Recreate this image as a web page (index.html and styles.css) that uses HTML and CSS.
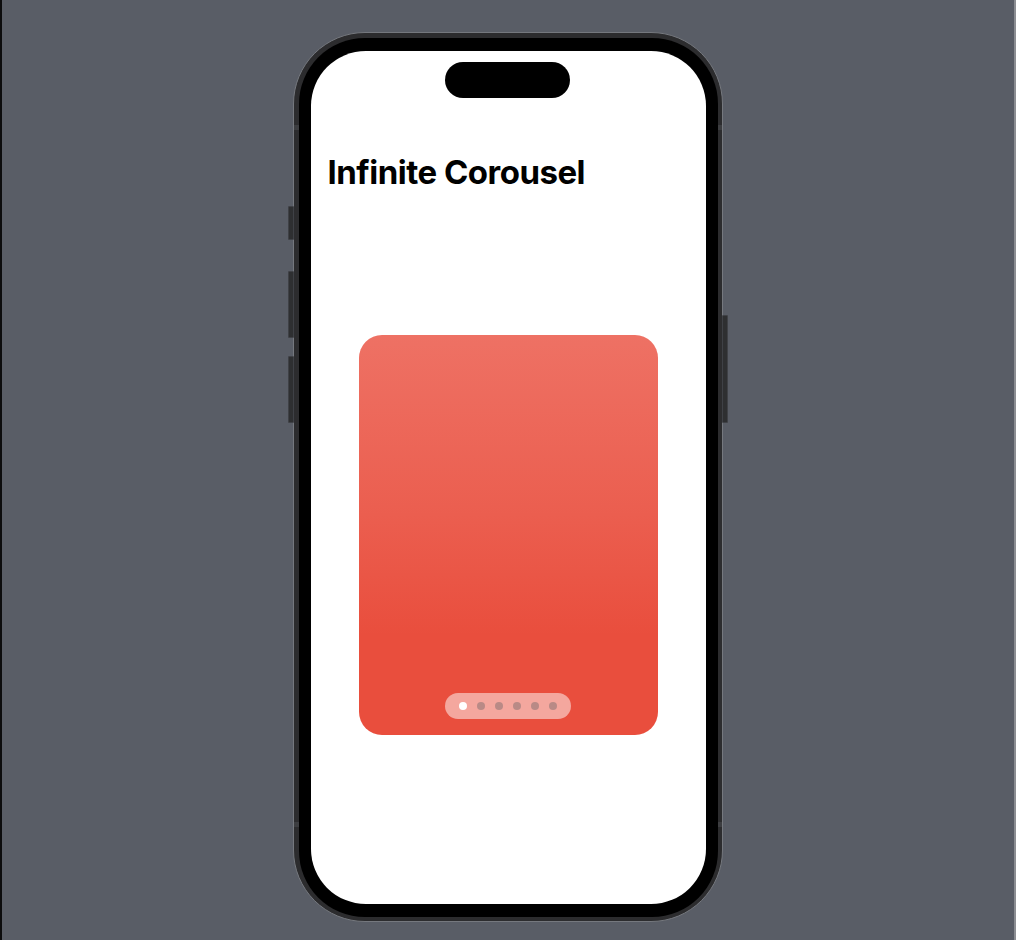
FILE: index.html
```html
<!DOCTYPE html>
<html lang="en">
<head>
<meta charset="utf-8">
<title>Infinite Corousel</title>
<link rel="stylesheet" href="styles.css">
</head>
<body>
<div class="stage">
  <div class="phone">
    <span class="btn btn-action"></span>
    <span class="btn btn-vol-up"></span>
    <span class="btn btn-vol-down"></span>
    <span class="btn btn-power"></span>
    <span class="band band-tl"></span>
    <span class="band band-tr"></span>
    <span class="band band-bl"></span>
    <span class="band band-br"></span>
    <div class="bezel">
      <div class="screen">
        <div class="island"></div>
        <h1 class="title">Infinite Corousel</h1>
        <div class="card">
          <div class="pager">
            <span class="dot active"></span>
            <span class="dot"></span>
            <span class="dot"></span>
            <span class="dot"></span>
            <span class="dot"></span>
            <span class="dot"></span>
          </div>
        </div>
      </div>
    </div>
  </div>
</div>
</body>
</html>
```

FILE: styles.css
```css
html, body {
  margin: 0;
  padding: 0;
}

body {
  background: #595d66;
  font-family: "Inter", "Liberation Sans", sans-serif;
}

.stage {
  box-sizing: border-box;
  height: 940px;
  padding-top: 32px;
  display: flex;
  justify-content: center;
  border-left: 2px solid #0c0c0d;
  border-right: 2px solid #8b8d92;
}

.phone {
  position: relative;
  box-sizing: border-box;
  width: 430px;
  height: 890px;
  border-radius: 72px;
  background: #2c2c2e;
  border: 1.5px solid #75787e;
  padding: 4.5px;
}

.btn {
  position: absolute;
  width: 4px;
  background: #2e2f31;
  border: 1px solid #3f4146;
  border-radius: 1px;
}

.btn-action { left: -6px; top: 173px; height: 32px; }
.btn-vol-up { left: -6px; top: 238px; height: 65px; }
.btn-vol-down { left: -6px; top: 323px; height: 65px; }
.btn-power { right: -6px; top: 282px; height: 106px; }

.band {
  position: absolute;
  width: 5px;
  height: 5px;
  background: #3c3d40;
}
.band-tl { left: 0; top: 92px; }
.band-tr { right: 0; top: 92px; }
.band-bl { left: 0; top: 789px; }
.band-br { right: 0; top: 789px; }

.bezel {
  position: relative;
  height: 100%;
  box-sizing: border-box;
  background: #000;
  border-radius: 66px;
  padding: 13px 12px;
}

.screen {
  position: relative;
  height: 100%;
  background: #fff;
  border-radius: 55px;
  display: flex;
  flex-direction: column;
  padding-top: 101px;
  box-sizing: border-box;
  overflow: hidden;
}

.island {
  position: absolute;
  top: 11px;
  left: 50%;
  margin-left: -63px;
  width: 125px;
  height: 36px;
  border-radius: 18px;
  background: #000;
}

.title {
  margin: 0 0 0 17px;
  font-size: 33px;
  line-height: 40px;
  font-weight: 700;
  color: #000;
  letter-spacing: -0.5px;
}

.card {
  align-self: center;
  margin-top: 143px;
  width: 299px;
  height: 400px;
  border-radius: 23px;
  background: linear-gradient(180deg, #ee7164 0%, #eb5e4f 45%, #e94e3d 75%, #e94e3d 100%);
  display: flex;
  flex-direction: column;
  justify-content: flex-end;
  align-items: center;
  padding-bottom: 16px;
  box-sizing: border-box;
}

.pager {
  display: flex;
  align-items: center;
  gap: 10px;
  height: 26px;
  padding: 0 14px;
  border-radius: 13px;
  background: rgba(255, 255, 255, 0.5);
}

.dot {
  width: 8px;
  height: 8px;
  border-radius: 50%;
  background: #b98a86;
}

.dot.active {
  background: #fff;
}
```
